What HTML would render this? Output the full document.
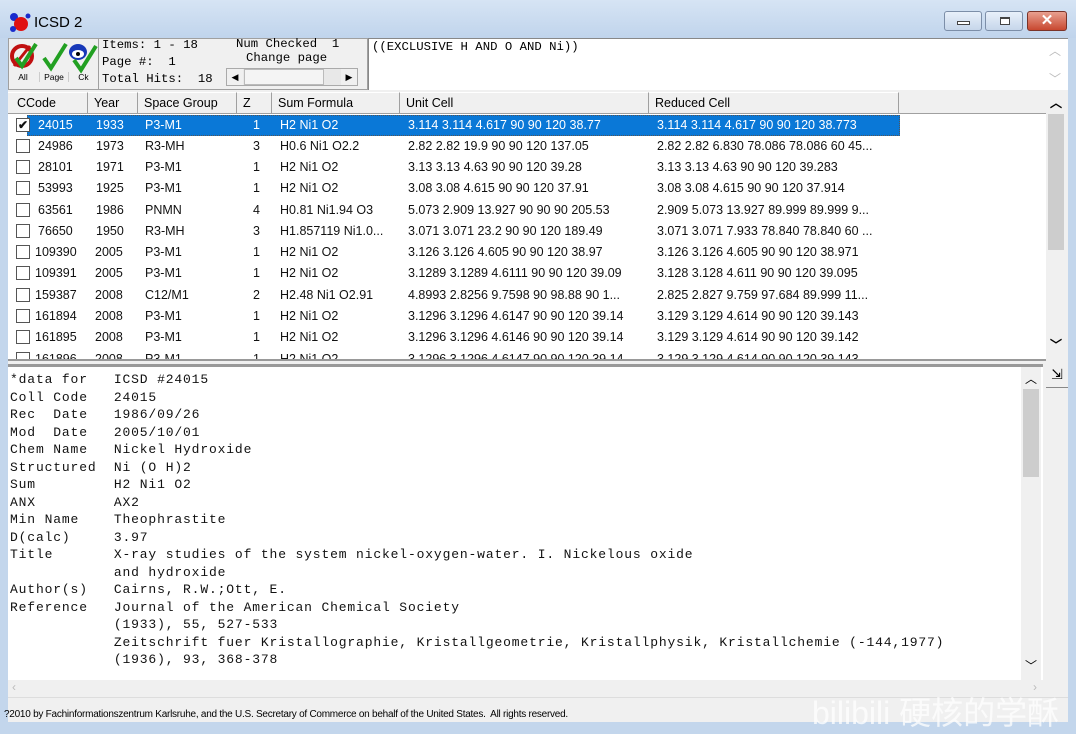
<!DOCTYPE html>
<html><head><meta charset="utf-8"><style>
*{margin:0;padding:0;box-sizing:border-box}
body{width:1076px;height:728px;overflow:hidden;background:#c3d6ec;font-family:"Liberation Sans",sans-serif;position:relative}
.abs{position:absolute}
.title{left:0;top:0;width:1076px;height:38px;background:linear-gradient(#d6e4f4,#c0d4ec)}
.mono{font-family:"Liberation Mono",monospace}
.client{left:8px;top:38px;width:1060px;height:684px;background:#f0f0f0}
.hdr{top:92px;height:22px;background:#f0f0f0;border-bottom:1px solid #a0a0a0;font-size:12.5px;color:#000}
.hdr div{position:absolute;top:0;height:22px;line-height:21px;padding-left:6px;border-right:1px solid #a0a0a0;border-top:1px solid #fff}
.row{position:absolute;left:0;height:21px;font-size:12.5px;color:#111;white-space:nowrap}
.row span{position:absolute;top:3px}
.cb{position:absolute;left:8px;top:3px;width:14px;height:14px;border:1px solid #555;background:#fff}
.det{left:8px;top:367px;width:1035px;height:313px;background:#fff;font-size:13px;letter-spacing:0.85px;line-height:17.5px;white-space:pre;color:#111;padding:4px 0 0 2px}
</style></head><body>
<div class="abs title"></div>
<svg class="abs" style="left:9px;top:12px" width="22" height="22"><circle cx="5" cy="5" r="4" fill="#1a2ccc"/><circle cx="12" cy="12" r="7" fill="#e01010"/><circle cx="4" cy="17" r="3" fill="#1a2ccc"/><circle cx="19" cy="4" r="2.5" fill="#1a2ccc"/></svg>
<div class="abs" style="left:34px;top:14px;font-size:15px;color:#000">ICSD 2</div>
<div class="abs" style="left:944px;top:11px;width:38px;height:20px;border:1px solid #7c8ea8;border-radius:3px;background:linear-gradient(#e8f0fa,#c6d6ea)"><div style="position:absolute;left:12px;top:9px;width:13px;height:4px;background:#fff;border:1px solid #444"></div></div>
<div class="abs" style="left:985px;top:11px;width:38px;height:20px;border:1px solid #7c8ea8;border-radius:3px;background:linear-gradient(#e8f0fa,#c6d6ea)"><div style="position:absolute;left:14px;top:5px;width:10px;height:8px;background:#fff;border:1px solid #444;border-top-width:2px"></div></div>
<div class="abs" style="left:1027px;top:11px;width:40px;height:20px;border:1px solid #7a3328;border-radius:3px;background:linear-gradient(#e8a090,#c84830);color:#fff;font-weight:bold;font-size:15px;text-align:center;line-height:18px">✕</div>
<div class="abs client"></div>
<!-- toolbar -->
<div class="abs" style="left:8px;top:38px;width:360px;height:52px;background:#f0f0f0;border:1px solid #a0a0a0"></div>
<svg class="abs" style="left:10px;top:40px" width="90" height="36">
<circle cx="12" cy="16" r="10" fill="none" stroke="#c01010" stroke-width="4"/><line x1="4" y1="26" x2="20" y2="6" stroke="#c01010" stroke-width="3"/>
<path d="M6 18 L12 26 L26 4" fill="none" stroke="#22a022" stroke-width="4"/>
<path d="M34 18 L41 28 L56 4" fill="none" stroke="#22a022" stroke-width="4"/>
<ellipse cx="68" cy="12" rx="9" ry="8" fill="#1838b8"/><ellipse cx="68" cy="14" rx="6" ry="4" fill="#fff"/><circle cx="68" cy="14" r="2" fill="#000"/>
<path d="M64 20 L71 30 L86 6" fill="none" stroke="#22a022" stroke-width="4"/>
</svg>
<div class="abs" style="left:8px;top:72px;width:30px;font-size:8.5px;text-align:center">All</div>
<div class="abs" style="left:39px;top:72px;width:29px;font-size:8.5px;text-align:center;border-left:1px solid #ccc">Page</div>
<div class="abs" style="left:68px;top:72px;width:30px;font-size:8.5px;text-align:center;border-left:1px solid #ccc">Ck</div>
<div class="abs mono" style="left:98px;top:38px;width:1px;height:52px;background:#a0a0a0"></div>
<div class="abs mono" style="left:102px;top:37px;font-size:12.3px;line-height:17px;white-space:pre">Items: 1 - 18
Page #:  1
Total Hits:  18</div>
<div class="abs mono" style="left:236px;top:37px;font-size:12.3px;white-space:pre">Num Checked  1</div>
<div class="abs mono" style="left:246px;top:51px;font-size:12.3px;white-space:pre">Change page</div>
<div class="abs" style="left:226px;top:68px;width:132px;height:18px;background:#e8e8e8;border:1px solid #aaa"><div style="position:absolute;left:0;top:0;width:16px;height:16px;background:#f0f0f0;font-size:9px;text-align:center;line-height:16px">◀</div><div style="position:absolute;left:17px;top:0;width:80px;height:16px;background:#f4f4f4;border:1px solid #bbb"></div><div style="position:absolute;right:0;top:0;width:16px;height:16px;background:#f0f0f0;font-size:9px;text-align:center;line-height:16px">▶</div></div>
<div class="abs" style="left:368px;top:38px;width:700px;height:52px;background:#fff;border-top:1px solid #888;border-left:1px solid #888"></div>
<div class="abs mono" style="left:372px;top:40px;font-size:12.3px">((EXCLUSIVE H AND O AND Ni))</div>
<div class="abs" style="left:1049px;top:42px;color:#bbb;font-size:12px">︿</div>
<div class="abs" style="left:1049px;top:70px;color:#bbb;font-size:12px">﹀</div>
<!-- table -->
<div class="abs" style="left:8px;top:92px;width:1038px;height:269px;background:#fff;border-bottom:2px solid #999"></div>
<div class="abs hdr" style="left:8px;width:1038px">
<div style="left:0;width:80px;padding-left:9px">CCode</div>
<div style="left:80px;width:50px">Year</div>
<div style="left:130px;width:99px">Space Group</div>
<div style="left:229px;width:35px">Z</div>
<div style="left:264px;width:128px">Sum Formula</div>
<div style="left:392px;width:249px">Unit Cell</div>
<div style="left:641px;width:250px">Reduced Cell</div>
</div>
<div class="abs" style="left:1046px;top:92px;width:20px;height:269px;background:#f0f0f0"><div style="position:absolute;left:2px;top:22px;width:16px;height:136px;background:#cdcdcd"></div><div style="position:absolute;top:2px;width:20px;text-align:center;font-size:12px;font-weight:bold">︿</div><div style="position:absolute;top:244px;width:20px;text-align:center;font-size:12px;font-weight:bold">﹀</div></div>
<div class="abs" style="left:8px;top:114px;width:1038px;height:245px;overflow:hidden">
<div class="row" style="top:1px;width:1038px"><div style="position:absolute;left:19px;top:0;width:873px;height:21px;background:#0a78d7;border:1px dotted #555"></div><div class="cb" style="font-size:12px;line-height:12px;text-align:center;font-weight:bold">✔</div><span style="left:30px;color:#fff">24015</span><span style="left:88px;color:#fff">1933</span><span style="left:137px;color:#fff">P3-M1</span><span style="left:245px;color:#fff">1</span><span style="left:272px;color:#fff">H2 Ni1 O2</span><span style="left:400px;color:#fff">3.114 3.114 4.617 90 90 120 38.77</span><span style="left:649px;color:#fff">3.114 3.114 4.617 90 90 120 38.773</span></div>
<div class="row" style="top:22px"><div class="cb"></div><span style="left:30px">24986</span><span style="left:88px">1973</span><span style="left:137px">R3-MH</span><span style="left:245px">3</span><span style="left:272px">H0.6 Ni1 O2.2</span><span style="left:400px">2.82 2.82 19.9 90 90 120 137.05</span><span style="left:649px">2.82 2.82 6.830 78.086 78.086 60 45...</span></div>
<div class="row" style="top:43px"><div class="cb"></div><span style="left:30px">28101</span><span style="left:88px">1971</span><span style="left:137px">P3-M1</span><span style="left:245px">1</span><span style="left:272px">H2 Ni1 O2</span><span style="left:400px">3.13 3.13 4.63 90 90 120 39.28</span><span style="left:649px">3.13 3.13 4.63 90 90 120 39.283</span></div>
<div class="row" style="top:64px"><div class="cb"></div><span style="left:30px">53993</span><span style="left:88px">1925</span><span style="left:137px">P3-M1</span><span style="left:245px">1</span><span style="left:272px">H2 Ni1 O2</span><span style="left:400px">3.08 3.08 4.615 90 90 120 37.91</span><span style="left:649px">3.08 3.08 4.615 90 90 120 37.914</span></div>
<div class="row" style="top:86px"><div class="cb"></div><span style="left:30px">63561</span><span style="left:88px">1986</span><span style="left:137px">PNMN</span><span style="left:245px">4</span><span style="left:272px">H0.81 Ni1.94 O3</span><span style="left:400px">5.073 2.909 13.927 90 90 90 205.53</span><span style="left:649px">2.909 5.073 13.927 89.999 89.999 9...</span></div>
<div class="row" style="top:107px"><div class="cb"></div><span style="left:30px">76650</span><span style="left:88px">1950</span><span style="left:137px">R3-MH</span><span style="left:245px">3</span><span style="left:272px">H1.857119 Ni1.0...</span><span style="left:400px">3.071 3.071 23.2 90 90 120 189.49</span><span style="left:649px">3.071 3.071 7.933 78.840 78.840 60 ...</span></div>
<div class="row" style="top:128px"><div class="cb"></div><span style="left:27px">109390</span><span style="left:87px">2005</span><span style="left:137px">P3-M1</span><span style="left:245px">1</span><span style="left:272px">H2 Ni1 O2</span><span style="left:400px">3.126 3.126 4.605 90 90 120 38.97</span><span style="left:649px">3.126 3.126 4.605 90 90 120 38.971</span></div>
<div class="row" style="top:149px"><div class="cb"></div><span style="left:27px">109391</span><span style="left:87px">2005</span><span style="left:137px">P3-M1</span><span style="left:245px">1</span><span style="left:272px">H2 Ni1 O2</span><span style="left:400px">3.1289 3.1289 4.6111 90 90 120 39.09</span><span style="left:649px">3.128 3.128 4.611 90 90 120 39.095</span></div>
<div class="row" style="top:171px"><div class="cb"></div><span style="left:27px">159387</span><span style="left:87px">2008</span><span style="left:137px">C12/M1</span><span style="left:245px">2</span><span style="left:272px">H2.48 Ni1 O2.91</span><span style="left:400px">4.8993 2.8256 9.7598 90 98.88 90 1...</span><span style="left:649px">2.825 2.827 9.759 97.684 89.999 11...</span></div>
<div class="row" style="top:192px"><div class="cb"></div><span style="left:27px">161894</span><span style="left:87px">2008</span><span style="left:137px">P3-M1</span><span style="left:245px">1</span><span style="left:272px">H2 Ni1 O2</span><span style="left:400px">3.1296 3.1296 4.6147 90 90 120 39.14</span><span style="left:649px">3.129 3.129 4.614 90 90 120 39.143</span></div>
<div class="row" style="top:213px"><div class="cb"></div><span style="left:27px">161895</span><span style="left:87px">2008</span><span style="left:137px">P3-M1</span><span style="left:245px">1</span><span style="left:272px">H2 Ni1 O2</span><span style="left:400px">3.1296 3.1296 4.6146 90 90 120 39.14</span><span style="left:649px">3.129 3.129 4.614 90 90 120 39.142</span></div>
<div class="row" style="top:235px"><div class="cb"></div><span style="left:27px">161896</span><span style="left:87px">2008</span><span style="left:137px">P3-M1</span><span style="left:245px">1</span><span style="left:272px">H2 Ni1 O2</span><span style="left:400px">3.1296 3.1296 4.6147 90 90 120 39.14</span><span style="left:649px">3.129 3.129 4.614 90 90 120 39.143</span></div>
</div>
<!-- details -->
<div class="abs" style="left:8px;top:364px;width:1035px;height:3px;background:#999"></div>
<div class="abs det mono">*data for   ICSD #24015
Coll Code   24015
Rec  Date   1986/09/26
Mod  Date   2005/10/01
Chem Name   Nickel Hydroxide
Structured  Ni (O H)2
Sum         H2 Ni1 O2
ANX         AX2
Min Name    Theophrastite
D(calc)     3.97
Title       X-ray studies of the system nickel-oxygen-water. I. Nickelous oxide
            and hydroxide
Author(s)   Cairns, R.W.;Ott, E.
Reference   Journal of the American Chemical Society
            (1933), 55, 527-533
            Zeitschrift fuer Kristallographie, Kristallgeometrie, Kristallphysik, Kristallchemie (-144,1977)
            (1936), 93, 368-378</div>
<div class="abs" style="left:1021px;top:367px;width:20px;height:313px;background:#f0f0f0"><div style="position:absolute;left:2px;top:22px;width:16px;height:88px;background:#cdcdcd"></div><div style="position:absolute;top:3px;width:20px;text-align:center;font-size:12px">︿</div><div style="position:absolute;top:290px;width:20px;text-align:center;font-size:12px">﹀</div></div>
<div class="abs" style="left:1046px;top:366px;width:22px;height:22px;border-bottom:1px solid #888;font-size:14px;text-align:center">⇲</div>
<div class="abs" style="left:8px;top:680px;width:1035px;height:17px;background:#f0f0f0;color:#bbb;font-size:12px"><span style="position:absolute;left:4px;top:0">‹</span><span style="position:absolute;right:6px;top:0">›</span></div>
<div class="abs" style="left:8px;top:697px;width:1060px;height:25px;background:#f0f0f0;border-top:1px solid #ddd"></div>
<div class="abs" style="left:4px;top:709px;font-size:10px;letter-spacing:-0.25px;color:#000;white-space:nowrap">?2010 by Fachinformationszentrum Karlsruhe, and the U.S. Secretary of Commerce on behalf of the United States.&nbsp; All rights reserved.</div>
<div class="abs" style="left:812px;top:688px;font-size:32px;color:rgba(255,255,255,0.75);font-family:'Liberation Sans','Noto Sans CJK SC',sans-serif;white-space:nowrap">bilibili 硬核的学酥</div>
</body></html>
